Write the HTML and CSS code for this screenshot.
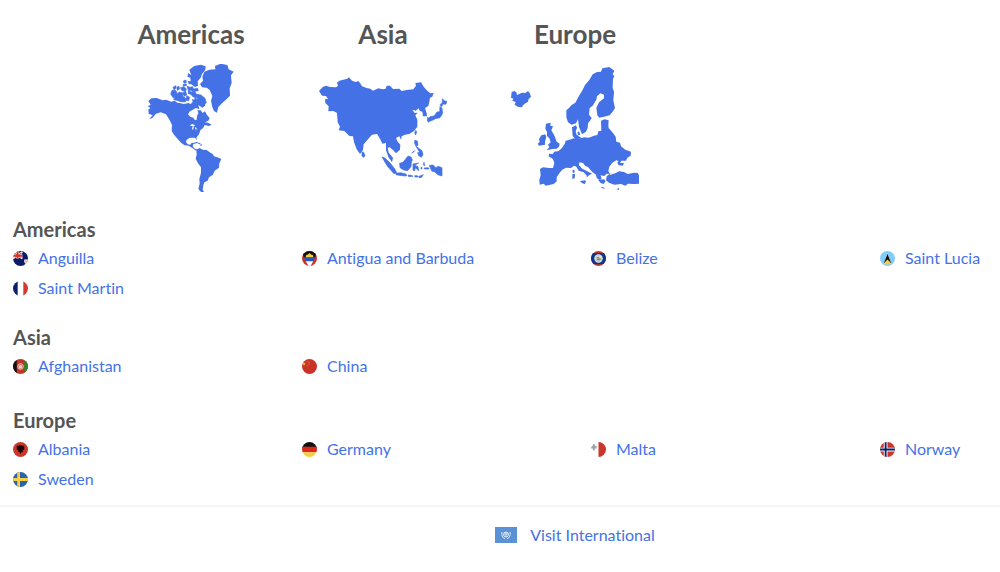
FILE: index.html
```html
<!DOCTYPE html>
<html lang="en">

<head>
    <meta charset="UTF-8">
    <meta name="viewport" content="width=device-width, initial-scale=1.0">
    <title>Choose your country</title>
    <link rel="stylesheet" href="styles.css">
</head>

<body>
    <nav class="regions">
        <section class="region">
            <h2>Americas</h2>
            <svg class="map" viewBox="-9 27 384 384" aria-hidden="true">
                <path d="M55 138L64 130L80 129L98 136L108 134L124 140L134 137L142 143L152 145L162 147L175 144L182 147L188 141L186 132L193 134L194 124L200 131L208 126L219 137L227 151L217 158L205 150L208 162L196 159L192 163L180 169L174 178L181 185L190 188L195 196L200 194L201 183L205 174L202 166L212 166L218 174L225 169L231 180L239 189L235 197L225 202L234 203L245 209L237 213L224 210L220 218L211 226L207 238L199 248L201 256L195 248L180 248L170 254L168 261L173 268L181 269L185 263L191 264L188 274L194 281L201 282L198 287L187 279L176 272L164 271L153 263L141 250L132 239L125 228L126 210L120 197L108 178L92 172L78 176L66 190L58 191L68 181L56 176L55 164L61 158L53 154L62 149Z" />
                <path d="M210 87L219 77L217 65L223 50L238 44L256 43L255 33L272 26L292 30L296 43L311 50L303 61L305 84L299 100L300 122L290 132L276 145L265 156L261 173L252 168L247 157L243 137L247 123L239 105L230 98L216 97Z" />
                <path d="M178 44L193 33L212 29L227 34L226 44L216 57L212 68L203 79L204 92L195 96L184 88L176 87L173 78L182 79L181 68L172 65L175 54L184 61Z" />
                <path class="islands" d="M129 97l9-5v8l-6 4zM141 96l6-2 1 9-7 3zM151 98l11-3 7 7-2 7-11-2zM171 94l9 3 8-2 2 7 13-2 2 7-15 3-8-4-6 3zM160 78l8-3 1 8-7 1zM159 88l10-1v5l-9 1zM122 117l4-11 9-1 6 7-2 11-9 6zM139 119l9-8 10 3 1 10 9 7-2 10-13-1-13-4-9-2 4-8zM158 113l9-4 3 11-7 4zM175 108l10 3 9-1 6 8 13 2 12 10 4 14-8 4-8-12-11-8-12-2-8-8-7-2zM170 122l9 5-3 10-8-1z" />
                <path d="M187 265l12-4 9 3 9 5-8-1-8-4-10 3zM208 270l9-1-2 3zM199 284L209 279L218 284L230 285L239 292L248 297L252 304L266 308L274 312L268 325L267 338L254 347L248 360L237 367L233 377L223 382L220 391L218 404L222 411L213 411L205 402L209 386L208 372L213 353L213 337L204 325L197 311L200 299Z" />
                <path class="water" d="M179 212l7-5 10 4-5 3zM188 214l4 1-3 9-3-1zM195 215l6 6-5 1zM205 224l-8 2-2-2z" />
            </svg>
        </section>
        <section class="region">
            <h2>Asia</h2>
            <svg class="map" viewBox="27 -3 384 384" aria-hidden="true">
                <path d="M27 78L38 66L48 62L60 66L78 67L84 62L81 53L88 47L100 44L112 41L117 37L126 47L137 51L145 48L150 54L156 64L170 69L181 71L189 77L205 70L218 73L227 71L230 62L240 62L249 72L268 71L275 78L290 75L310 73L318 62L316 54L333 52L341 65L350 76L361 85L371 84L367 95L360 98L358 111L355 123L345 129L350 145L351 154L339 154L337 140L329 137L326 130L317 137L307 134L314 144L323 143L316 151L322 164L322 185L312 198L299 206L283 210L275 214L273 224L268 214L258 219L263 230L271 239L270 254L258 265L250 256L239 247L233 248L236 263L249 278L246 292L235 276L228 256L228 234L217 236L210 221L201 207L186 209L178 218L161 238L159 255L150 267L140 253L132 232L129 214L118 213L103 198L86 196L90 185L83 172L81 144L70 138L55 139L56 124L46 114L45 103L54 102L48 93L36 92Z" />
                <path class="islands" d="M397 101l7 7 8 1-5 9-8-1-4 8-5-6 7-6zM390 124l6 6 2 15-8 13-14 3-5 3-12 5-6-7 7-7 12-2 9-12 8-1zM353 157l6 6-2 9-5-4zM317 196l3 4-3 10-3-6zM156 261l5 1 4 10-4 5-5-4zM216 276l10 4 15 15 14 18 5 10-8 3-18-20-9-14zM257 325l15-2 16 4 2 6-15-1-17-3zM269 295l10-3 15-19 9 3 4 8-3 9-1 12-10 12-12-2-11-7zM314 226l8 2 2 12-6 4-4-9zM318 244l10 7 8 6 3 12-5 8-8-5-3-9 6-1zM314 257l-9 7 7-4zM309 297l17-3-12 7 10 4 2 12-5-4-5-5-2 9-5-1zM294 330l10 1 5 3-13 1zM314 332l8 0 3 4-10 0zM327 334l13-5-5 8-8 1zM333 307l3 0v5h-3zM342 292l2 11-4-4zM342 309l13-1 2 4-13 0zM358 301l12-1 7 8 8-4 11 4V333l-13-4-8-8-10-3z" />
            </svg>
        </section>
        <section class="region">
            <h2>Europe</h2>
            <svg class="map" viewBox="18 27 384 384" aria-hidden="true">
                <path d="M20 111l9-3 5 4 2 8 8-4 8-3 9 1 8-6 5 6 4 11-7 7-2 8-12 8-7 9-12-2-9-6 3-8-10-4 3-6-7-3z" />
                <path d="M184 166L192 159L199 151L211 143L220 126L231 108L240 90L253 75L263 58L276 51L288 50L292 40L313 36L328 47L323 58L328 63L324 72L323 98L327 111L325 136L330 159L324 169L314 181L297 185L283 188L277 181L274 158L282 142L297 130L297 119L286 115L276 124L274 134L263 152L254 159L252 179L260 189L255 197L249 205L248 219L243 230L231 238L222 216L219 193L213 205L200 209L189 202L184 187Z" />
                <path d="M201 217l12-6 3 7-4 12 3 9 10 7 9 5-10 0-12 2-9-10zM217 232l5-3 4 10-6 2zM123 206l14-3-1 9 8 2-5 12 7 12 4 8 5 14 9 6-2 9-7 6-13 1-17 4 8-10-4-7 8-7-4-12-7-7 0-12-5-10zM109 241l12-3 3 8-4 14 0 9-18 3-4-6 6-5-2-9z" />
                <path d="M288 197L299 193L311 196L310 210L311 219L324 234L332 245L334 260L345 263L348 274L361 284L378 290L377 302L367 308L363 317L349 317L345 323L357 324L353 332L341 331L337 323L341 318L334 316L322 323L313 335L310 348L315 357L305 356L298 363L286 361L290 370L285 375L275 369L273 359L261 350L249 336L241 333L234 324L223 322L222 331L232 341L244 347L261 356L252 361L244 369L246 363L236 352L221 347L214 335L207 332L198 339L183 338L172 344L164 353L155 367L155 379L146 387L129 391L122 392L116 386L104 389L103 375L107 361L105 342L114 337L132 339L144 339L148 325L144 312L131 304L132 296L143 297L148 290L161 288L170 280L179 267L182 257L194 254L206 250L222 251L237 247L251 248L267 242L277 240L280 229L289 227Z" />
                <path d="M305 364L315 356L327 356L343 349L357 351L368 357L387 353L399 354L404 368L404 386L388 387L369 386L361 392L348 387L328 389L312 383L303 376ZM279 374l18-1 5 5-6 9-9-3zM202 346l6-2 1 8-5 3zM202 358l8-2-1 14-7 2zM227 378l13-2 3 3-4 9-13-7zM289 396l10 2-1 3-10-3zM334 402l9-3-2 6z" />
                <path class="water" d="M315 358l9-5-1 4-8 3z" />
            </svg>
        </section>
    </nav>

    <main class="countries">
        <section class="group">
            <h3>Americas</h3>
            <ul>
                <li><a href="#anguilla">
                    <svg class="flag" viewBox="0 0 16 16" aria-hidden="true">
                        <path fill="#0b1b68" d="M0 0h16v16H0z" />
                        <path stroke="#fff" stroke-width="2" d="M0 1l10 7M10 1L0 8" />
                        <path stroke="#fff" stroke-width="3" d="M5 0v8M0 5h10" />
                        <path stroke="#d8352b" stroke-width="2" d="M5 0v8M0 5h10" />
                        <path stroke="#d8352b" d="M1 2l8 5M9 2L2 7" />
                        <path fill="#fff" d="M12 9h4v3q-1 2-2 2-2-1-2-3z" />
                        <path fill="#eaa24c" d="M13 10h2v2h-2z" />
                    </svg>Anguilla</a></li>
                <li><a href="#antigua-and-barbuda">
                    <svg class="flag" viewBox="0 0 16 16" aria-hidden="true">
                        <path fill="#cf3327" d="M0 0h16v16H0z" />
                        <path fill="#111" d="M0 0h16L14 7H2z" />
                        <path fill="#f6ca45" d="M4 7V5l1-1 1 0 2-2 2 2 1 0 1 1v2z" />
                        <path fill="#2457c5" d="M2 7h12l-2 4H4z" />
                        <path fill="#fff" d="M4 11h8l-4 7z" />
                    </svg>Antigua and Barbuda</a></li>
                <li><a href="#belize">
                    <svg class="flag" viewBox="0 0 16 16" aria-hidden="true">
                        <path fill="#c9362c" d="M0 0h16v16H0z" />
                        <path fill="#10358f" d="M0 2h16v12H0z" />
                        <circle cx="8" cy="8" r="4.500" fill="#e8eee5" />
                        <circle cx="8" cy="8" r="3.500" fill="none" stroke="#a9c0a8" stroke-width=".6" />
                        <path fill="#6b8fae" d="M6 8h4v2H6z" />
                        <path fill="#a58855" d="M6 6h3v2H6zM9 8h2v1H9z" />
                    </svg>Belize</a></li>
                <li><a href="#saint-lucia">
                    <svg class="flag" viewBox="0 0 16 16" aria-hidden="true">
                        <path fill="#80cdfb" d="M0 0h16v16H0z" />
                        <path fill="#fff" d="M8 2l4 11H4z" />
                        <path fill="#111" d="M8 3l4 10H4z" />
                        <path fill="#f7cd46" d="M8 9l5 5H3z" />
                    </svg>Saint Lucia</a></li>
                <li><a href="#saint-martin">
                    <svg class="flag" viewBox="0 0 16 16" aria-hidden="true">
                        <path fill="#fff" d="M0 0h16v16H0z" />
                        <path fill="#0c1d6b" d="M0 0h5v16H0z" />
                        <path fill="#d33a2d" d="M11 0h5v16h-5z" />
                    </svg>Saint Martin</a></li>
            </ul>
        </section>

        <section class="group">
            <h3>Asia</h3>
            <ul>
                <li><a href="#afghanistan">
                    <svg class="flag" viewBox="0 0 16 16" aria-hidden="true">
                        <path fill="#c63429" d="M0 0h16v16H0z" />
                        <path fill="#111" d="M0 0h4v16H0z" />
                        <path fill="#2b8727" d="M12 0h4v16h-4z" />
                        <circle cx="8" cy="8" r="3" fill="none" stroke="#f1c7c1" stroke-width="1" />
                        <path fill="#f1c7c1" d="M7 6h2v1h1v3H6V7h1z" />
                    </svg>Afghanistan</a></li>
                <li><a href="#china">
                    <svg class="flag" viewBox="0 0 16 16" aria-hidden="true">
                        <path fill="#cb3228" d="M0 0h16v16H0z" />
                        <path fill="#f2c344" d="M2 3l.6 1.500h1.400l-1.100 1 .4 1.500L2 6.200.7 7l.4-1.500-1.100-1h1.400z" />
                        <path fill="#e89d3e" d="M5 2h1v1H5zM7 3h1v1H7zM7 5h1v1H7zM5 7h1v1H5z" />
                    </svg>China</a></li>
            </ul>
        </section>

        <section class="group">
            <h3>Europe</h3>
            <ul>
                <li><a href="#albania">
                    <svg class="flag" viewBox="0 0 16 16" aria-hidden="true">
                        <path fill="#cb352b" d="M0 0h16v16H0z" />
                        <path fill="#180808" d="M4 4l2 0 1-1 1 1 1-1 1 1 2 0 0 4-2 1 1 1-2 1-1 2-1-2-2-1 1-1-2-1z" />
                    </svg>Albania</a></li>
                <li><a href="#germany">
                    <svg class="flag" viewBox="0 0 16 16" aria-hidden="true">
                        <path fill="#111" d="M0 0h16v6H0z" />
                        <path fill="#da291c" d="M0 5h16v6H0z" />
                        <path fill="#f6ce46" d="M0 11h16v5H0z" />
                    </svg>Germany</a></li>
                <li><a href="#malta">
                    <svg class="flag" viewBox="0 0 16 16" aria-hidden="true">
                        <path fill="#fff" d="M0 0h8v16H0z" />
                        <path fill="#cb352b" d="M8 0h8v16H8z" />
                        <path fill="#a3a3a3" d="M2 2h2v2h2v3H4v2H2V7H0V4h2z" />
                    </svg>Malta</a></li>
                <li><a href="#norway">
                    <svg class="flag" viewBox="0 0 16 16" aria-hidden="true">
                        <path fill="#cb352b" d="M0 0h16v16H0z" />
                        <path stroke="#fff" stroke-width="4" d="M6 0v16M0 8h16" />
                        <path stroke="#0e2169" stroke-width="2" d="M6 0v16M0 8h16" />
                    </svg>Norway</a></li>
                <li><a href="#sweden">
                    <svg class="flag" viewBox="0 0 16 16" aria-hidden="true">
                        <path fill="#2c64a6" d="M0 0h16v16H0z" />
                        <path stroke="#f8cf48" stroke-width="3" d="M6 0v16M0 8h16" />
                    </svg>Sweden</a></li>
            </ul>
        </section>
    </main>

    <footer>
        <a href="#international">
            <svg class="un-flag" viewBox="0 0 22 16" aria-hidden="true">
                <path fill="#5b91d5" d="M0 0h22v16H0z" />
                <g fill="none" stroke="#dce9f8">
                    <circle cx="11" cy="7.500" r="2.500" />
                    <path d="M7 5q-1 5 3 7M15 5q1 5-3 7M11 5v5M9 7h4" />
                </g>
            </svg>Visit International</a>
    </footer>
</body>

</html>
```
FILE: styles.css
```css
body {
    font-family: Lato, sans-serif;
    font-variant-ligatures: none;
    margin: 0;
    color: #555;
    background: #fff;
    overflow-x: hidden;
}

h2, h3 {
    margin: 0;
    font-weight: 700;
}

a {
    display: inline-flex;
    align-items: center;
    color: #4472e6;
    font-size: 16px;
    line-height: 20px;
    text-decoration: none;
    white-space: nowrap;
}

a:hover {
    text-decoration: underline;
}

.regions {
    display: grid;
    grid-template-columns: repeat(3, minmax(0, 192px));
    padding: 18px 0 0 95px;
}

.region {
    text-align: center;
}

.region h2 {
    font-size: 26px;
    line-height: 32px;
    margin-bottom: 14px;
}

.map {
    display: block;
    width: 128px;
    max-width: 100%;
    margin: 0 auto;
    fill: #4472e6;
}

.map .islands {
    stroke: #4472e6;
    stroke-width: 2;
}

.map .water {
    fill: #fff;
}

.countries {
    padding: 25px 0 16px 13px;
}

.group {
    min-height: 56px;
    margin-bottom: 27px;
}

.group:last-child {
    margin-bottom: 0;
}

.group h3 {
    font-size: 20px;
    line-height: 24px;
    margin-bottom: 7px;
}

.group ul {
    display: grid;
    grid-template-columns: repeat(3, 1fr) 120px;
    row-gap: 10px;
    list-style: none;
    margin: 0;
    padding: 0;
}

.group li {
    display: flex;
}

.flag {
    width: 15px;
    height: 15px;
    margin-right: 10px;
    border-radius: 50%;
}

.un-flag {
    width: 22px;
    height: 16px;
    margin-right: 13px;
}

footer {
    display: flex;
    justify-content: center;
    border-top: 2px solid #f4f4f4;
    padding: 18px 0 24px 15%;
}
```
